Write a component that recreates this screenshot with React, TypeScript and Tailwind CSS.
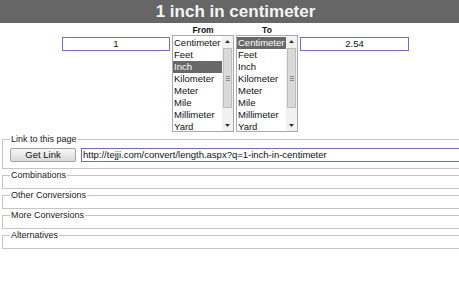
import React from 'react';

const UNITS = ['Centimeter', 'Feet', 'Inch', 'Kilometer', 'Meter', 'Mile', 'Millimeter', 'Yard'];

function Arrow({ up }: { up?: boolean }) {
  return (
    <div className="h-[11px] w-full bg-[#f3f3f3] flex items-center justify-center">
      <svg width="5" height="3" viewBox="0 0 5 3">
        {up ? <path d="M0 3 L2.5 0 L5 3 Z" fill="#333" /> : <path d="M0 0 L2.5 3 L5 0 Z" fill="#333" />}
      </svg>
    </div>
  );
}

function ListBox({ selected }: { selected: string }) {
  return (
    <div className="flex h-[97px] border border-[#a9a9a9] bg-white">
      <div className="flex-1 pt-[1px]">
        {UNITS.map(u => (
          <div
            key={u}
            className={
              'h-[12px] pl-[1px] text-[9.5px] leading-[12px] whitespace-nowrap overflow-hidden ' +
              (u === selected ? 'bg-[#686868] text-white' : 'text-[#111]')
            }
          >
            {u}
          </div>
        ))}
      </div>
      <div className="w-[11px] flex flex-col bg-[#f0f0f0]">
        <Arrow up />
        <div className="mt-[1px] h-[60px] mx-[1px] bg-[#d9d9d9] border border-[#bdbdbd] flex items-center justify-center">
          <div className="flex flex-col gap-[1px]">
            <div className="w-[4px] h-[1px] bg-[#888]" />
            <div className="w-[4px] h-[1px] bg-[#888]" />
            <div className="w-[4px] h-[1px] bg-[#888]" />
          </div>
        </div>
        <div className="flex-1" />
        <Arrow />
      </div>
    </div>
  );
}

function Group({ title, children }: { title: string; children?: React.ReactNode }) {
  return (
    <fieldset
      className={
        'mx-[2px] mt-[1px] border border-[#c4c4c4] pl-[7px] pr-[7px] ' + (children ? 'pb-[6px]' : 'pb-[8px]')
      }
    >
      <legend className="px-[1px] text-[9px] leading-[10px] text-[#1a1a1a]">{title}</legend>
      {children}
    </fieldset>
  );
}

export default function App() {
  return (
    <div className="w-screen h-screen overflow-hidden bg-white font-['Liberation_Sans',Arial,sans-serif]">
      <div className="w-[471px]">
        <div className="h-[23px] bg-[#666666] text-center text-[17px] font-bold leading-[23px] text-[#f4f4f4]">
          1 inch in centimeter
        </div>

        <div className="grid grid-cols-[108px_62px_62px_109px] gap-x-[2px] justify-center">
          <div />
          <div className="h-[12px] pt-[1px] text-center text-[8.5px] font-bold leading-[12px] text-[#111]">From</div>
          <div className="h-[12px] pt-[1px] text-center text-[8.5px] font-bold leading-[12px] text-[#111]">To</div>
          <div />

          <input
            readOnly
            value="1"
            className="mt-[2px] h-[14px] border border-[#6c6cdc] text-center text-[9.5px] text-[#111] outline-none"
          />
          <ListBox selected="Inch" />
          <ListBox selected="Centimeter" />
          <input
            readOnly
            value="2.54"
            className="mt-[2px] h-[14px] border border-[#6c6cdc] text-center text-[9.5px] text-[#111] outline-none"
          />
        </div>

        <div className="mt-[2px]">
          <Group title="Link to this page">
            <div className="mt-[4px] flex items-center gap-[5px]">
              <button className="h-[14px] w-[66px] rounded-[2px] border border-[#a3a3a3] bg-gradient-to-b from-[#f6f6f6] to-[#dadada] text-[9.5px] leading-[12px] text-[#111]">
                Get Link
              </button>
              <input
                readOnly
                value="http://tejji.com/convert/length.aspx?q=1-inch-in-centimeter"
                className="h-[14px] flex-1 border border-[#6c6cdc] px-[1px] text-[9.5px] text-[#111] outline-none"
              />
            </div>
          </Group>
          <Group title="Combinations" />
          <Group title="Other Conversions" />
          <Group title="More Conversions" />
          <Group title="Alternatives" />
        </div>
      </div>
    </div>
  );
}
